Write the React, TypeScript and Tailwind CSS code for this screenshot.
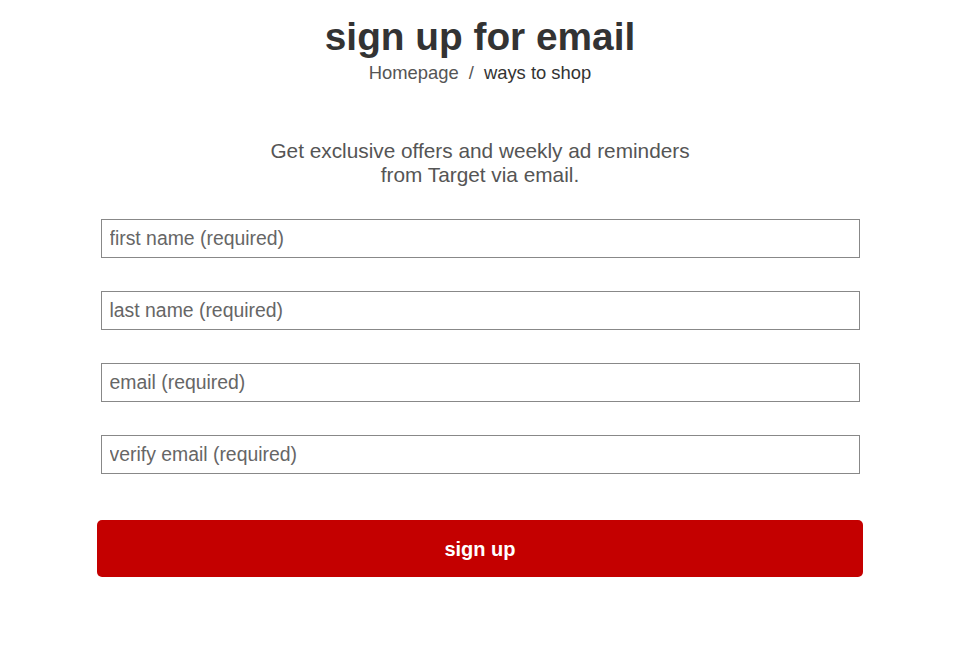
export default function App() {
  const fields = [
    "first name (required)",
    "last name (required)",
    "email (required)",
    "verify email (required)",
  ];

  return (
    <div className="min-h-screen bg-white pr-[15px] font-['Liberation_Sans',Arial,sans-serif]">
      <div className="mx-auto flex w-[766px] flex-col items-center pt-[14px]">
        <h1 className="text-[38.8px] font-bold leading-[46px] text-[#333]">sign up for email</h1>
        <p className="mt-[3px] text-[18.4px] leading-[20px]">
          <span className="text-[#555]">Homepage</span>
          <span className="mx-[10px] text-[#555]">/</span>
          <span className="text-[#333]">ways to shop</span>
        </p>

        <p className="mt-[56px] text-center text-[20.8px] leading-[24px] text-[#555]">
          Get exclusive offers and weekly ad reminders
          <br />
          from Target via email.
        </p>

        <form className="mt-[32px] flex w-full flex-col items-center">
          <div className="flex w-[759px] flex-col gap-[33px]">
            {fields.map((f) => (
              <input
                key={f}
                type="text"
                placeholder={f}
                className="h-[39px] w-full border border-[#888] px-[8px] text-[19.4px] text-[#333] outline-none placeholder:text-[#666]"
              />
            ))}
          </div>

          <button
            type="button"
            className="mt-[46px] h-[57px] w-[766px] rounded-[5px] bg-[#c40000] text-[20px] font-bold text-white"
          >
            sign up
          </button>
        </form>
      </div>
    </div>
  );
}
